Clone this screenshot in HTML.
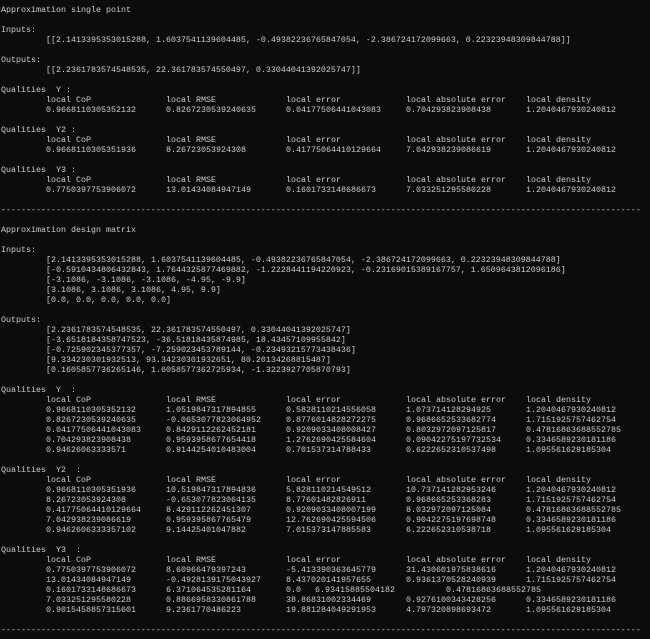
<!DOCTYPE html>
<html><head><meta charset="utf-8"><style>
html,body{margin:0;padding:0;background:#0c0c0c;}
body{width:650px;height:639px;overflow:hidden;position:relative;color:#cccccc;font-family:"Liberation Mono",monospace;font-size:8.33px;line-height:10px;}
#w{position:absolute;left:1px;top:5px;}
.l,.r{height:10px;white-space:pre;}
.r{padding-left:45px;}
.r s{text-decoration:none;display:inline-block;width:120px;}
.i{padding-left:45px;}
</style></head><body><div id="w">
<div class="l">Approximation single point</div>
<div class="l"></div>
<div class="l">Inputs:</div>
<div class="l i">[[2.1413395353015288, 1.6037541139604485, -0.49382236765847054, -2.386724172099663, 0.22323948309844788]]</div>
<div class="l"></div>
<div class="l">Outputs:</div>
<div class="l i">[[2.2361783574548535, 22.361783574550497, 0.33044041392025747]]</div>
<div class="l"></div>
<div class="l">Qualities  Y :</div>
<div class="r"><s>local CoP</s><s>local RMSE</s><s>local error</s><s>local absolute error</s><s>local density</s></div>
<div class="r"><s>0.9668110305352132</s><s>0.8267230539240635</s><s>0.04177506441043083</s><s>0.704293823908438</s><s>1.2040467930240812</s></div>
<div class="l"></div>
<div class="l">Qualities  Y2 :</div>
<div class="r"><s>local CoP</s><s>local RMSE</s><s>local error</s><s>local absolute error</s><s>local density</s></div>
<div class="r"><s>0.9668110305351936</s><s>8.26723053924308</s><s>0.41775064410129664</s><s>7.042938239086619</s><s>1.2040467930240812</s></div>
<div class="l"></div>
<div class="l">Qualities  Y3 :</div>
<div class="r"><s>local CoP</s><s>local RMSE</s><s>local error</s><s>local absolute error</s><s>local density</s></div>
<div class="r"><s>0.7750397753906072</s><s>13.01434084947149</s><s>0.1601733148686673</s><s>7.033251295580228</s><s>1.2040467930240812</s></div>
<div class="l"></div>
<div class="l">--------------------------------------------------------------------------------------------------------------------------------</div>
<div class="l"></div>
<div class="l">Approximation design matrix</div>
<div class="l"></div>
<div class="l">Inputs:</div>
<div class="l i">[2.1413395353015288, 1.6037541139604485, -0.49382236765847054, -2.386724172099663, 0.22323948309844788]</div>
<div class="l i">[-0.5910434806432843, 1.7644325877469882, -1.2228441194220923, -0.23169015389167757, 1.6509643812096186]</div>
<div class="l i">[-3.1086, -3.1086, -3.1086, -4.95, -9.9]</div>
<div class="l i">[3.1086, 3.1086, 3.1086, 4.95, 9.9]</div>
<div class="l i">[0.0, 0.0, 0.0, 0.0, 0.0]</div>
<div class="l"></div>
<div class="l">Outputs:</div>
<div class="l i">[2.2361783574548535, 22.361783574550497, 0.33044041392025747]</div>
<div class="l i">[-3.6518184358747523, -36.51818435874985, 18.43457109955842]</div>
<div class="l i">[-0.725902345377357, -7.259023453789144, -0.23493215773438436]</div>
<div class="l i">[9.334230301932513, 93.34230301932651, 80.20134268815487]</div>
<div class="l i">[0.1605857736265146, 1.6058577362725934, -1.3223927705870793]</div>
<div class="l"></div>
<div class="l">Qualities  Y  :</div>
<div class="r"><s>local CoP</s><s>local RMSE</s><s>local error</s><s>local absolute error</s><s>local density</s></div>
<div class="r"><s>0.9668110305352132</s><s>1.0519847317894855</s><s>0.5828110214556058</s><s>1.073714128294925</s><s>1.2040467930240812</s></div>
<div class="r"><s>0.8267230539240635</s><s>-0.0653077823064952</s><s>0.8776014828272275</s><s>0.9686652533682774</s><s>1.7151925757462754</s></div>
<div class="r"><s>0.04177506441043083</s><s>0.8429112262452181</s><s>0.9209033408008427</s><s>0.8032972097125817</s><s>0.47816863688552785</s></div>
<div class="r"><s>0.704293823908438</s><s>0.9593958677654418</s><s>1.2762690425584604</s><s>0.09042275197732534</s><s>0.3346589230181186</s></div>
<div class="r"><s>0.94626063333571</s><s>0.9144254010483004</s><s>0.701537314788433</s><s>0.6222652310537498</s><s>1.095561629185304</s></div>
<div class="l"></div>
<div class="l">Qualities  Y2  :</div>
<div class="r"><s>local CoP</s><s>local RMSE</s><s>local error</s><s>local absolute error</s><s>local density</s></div>
<div class="r"><s>0.9668110305351936</s><s>10.519847317894836</s><s>5.828110214549512</s><s>10.737141282953246</s><s>1.2040467930240812</s></div>
<div class="r"><s>8.26723053924308</s><s>-0.653077823064135</s><s>8.77601482826911</s><s>0.968665253368283</s><s>1.7151925757462754</s></div>
<div class="r"><s>0.41775064410129664</s><s>8.429112262451307</s><s>0.9209033408007199</s><s>8.032972097125084</s><s>0.47816863688552785</s></div>
<div class="r"><s>7.042938239086619</s><s>0.959395867765479</s><s>12.762690425594506</s><s>0.9042275197698748</s><s>0.3346589230181186</s></div>
<div class="r"><s>0.9462606333357102</s><s>9.14425401047882</s><s>7.015373147885583</s><s>6.222652310538718</s><s>1.095561629185304</s></div>
<div class="l"></div>
<div class="l">Qualities  Y3  :</div>
<div class="r"><s>local CoP</s><s>local RMSE</s><s>local error</s><s>local absolute error</s><s>local density</s></div>
<div class="r"><s>0.7750397753906072</s><s>8.60966479397243</s><s>-5.413390363645779</s><s>31.430601975838616</s><s>1.2040467930240812</s></div>
<div class="r"><s>13.01434084947149</s><s>-0.4928139175043927</s><s>8.437020141957655</s><s>0.9361370528240939</s><s>1.7151925757462754</s></div>
<div class="r"><s>0.1601733148686673</s><s>6.371064535281164</s><s style="width:29px">0.0</s><s style="width:131px">6.93415885504182</s><s>0.47816863688552785</s></div>
<div class="r"><s>7.033251295580228</s><s>0.8866958330861788</s><s>38.86831002334469</s><s>0.9276100343428256</s><s>0.3346589230181186</s></div>
<div class="r"><s>0.9015458857315601</s><s>9.2361770486223</s><s>19.881284049291953</s><s>4.797320898693472</s><s>1.095561629185304</s></div>
<div class="l"></div>
<div class="l">--------------------------------------------------------------------------------------------------------------------------------</div>
</div></body></html>
